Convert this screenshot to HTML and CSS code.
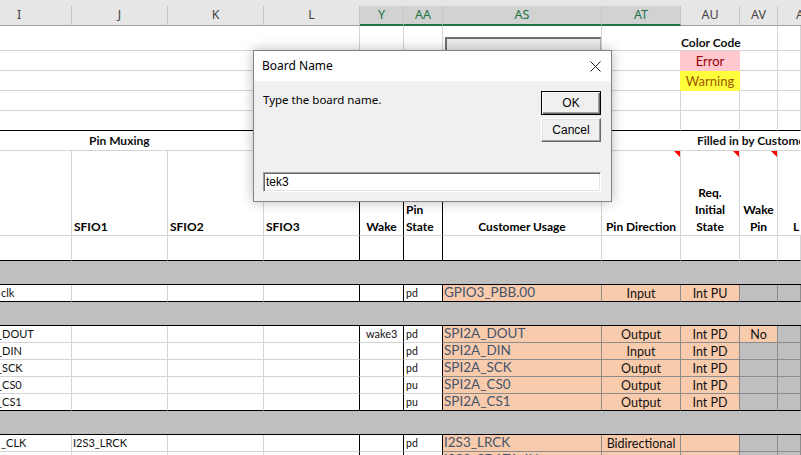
FILE: index.html
```html
<!DOCTYPE html>
<html>
<head>
<meta charset="utf-8">
<link rel="stylesheet" href="styles.css">
</head>
<body>
<div class="app">
  <div class="strip"></div>
  <div class="heads">
    <div class="h hi">I</div>
    <div class="h">J</div>
    <div class="h">K</div>
    <div class="h">L</div>
    <div class="h sel">Y</div>
    <div class="h sel">AA</div>
    <div class="h sel">AS</div>
    <div class="h sel">AT</div>
    <div class="h">AU</div>
    <div class="h">AV</div>
    <div class="h hlast">A</div>
  </div>

  <div class="rows">
    <div class="r h25">
      <div class="c s4"></div><div class="c"></div><div class="c"></div><div class="c"></div>
      <div class="c nr"></div><div class="c nr cc">Color Code</div><div class="c"></div><div class="c"></div>
    </div>
    <div class="r h20">
      <div class="c s4"></div><div class="c"></div><div class="c"></div><div class="c"></div>
      <div class="c pkr"></div><div class="c err">Error</div><div class="c"></div><div class="c"></div>
    </div>
    <div class="r h20">
      <div class="c s4"></div><div class="c"></div><div class="c"></div><div class="c"></div>
      <div class="c ywr"></div><div class="c warn">Warning</div><div class="c"></div><div class="c"></div>
    </div>
    <div class="r h20">
      <div class="c s4"></div><div class="c"></div><div class="c"></div><div class="c"></div>
      <div class="c"></div><div class="c"></div><div class="c"></div><div class="c"></div>
    </div>
    <div class="r h20 bb">
      <div class="c s4"></div><div class="c"></div><div class="c"></div><div class="c"></div>
      <div class="c"></div><div class="c"></div><div class="c"></div><div class="c"></div>
    </div>
    <div class="r h20">
      <div class="c s4 grp pm">Pin Muxing</div><div class="c"></div><div class="c"></div><div class="c"></div>
      <div class="c s4 grp fc">Filled in by Customer</div>
    </div>
    <div class="r h85">
      <div class="c th"></div>
      <div class="c th">SFIO1</div>
      <div class="c th">SFIO2</div>
      <div class="c th k">SFIO3</div>
      <div class="c th k mid">Wake</div>
      <div class="c th k">Pin<br>State</div>
      <div class="c th mid">Customer Usage</div>
      <div class="c th mid tri">Pin Direction</div>
      <div class="c th mid tri">Req.<br>Initial<br>State</div>
      <div class="c th mid tri">Wake<br>Pin</div>
      <div class="c th lv">L</div>
    </div>
    <div class="r h25 bb">
      <div class="c"></div><div class="c"></div><div class="c"></div><div class="c k"></div>
      <div class="c k"></div><div class="c k"></div><div class="c"></div><div class="c"></div>
      <div class="c"></div><div class="c"></div><div class="c"></div>
    </div>

    <div class="r h24 bb"><div class="c s11 gray"></div></div>

    <div class="r h17 bb">
      <div class="c t">clk</div><div class="c"></div><div class="c"></div><div class="c k"></div>
      <div class="c k"></div><div class="c k ps">pd</div>
      <div class="c o us">GPIO3_PBB.00</div><div class="c o dir">Input</div><div class="c o dir">Int PU</div>
      <div class="c g"></div><div class="c g"></div>
    </div>

    <div class="r h24 bb"><div class="c s11 gray"></div></div>

    <div class="r h17">
      <div class="c t cut">_DOUT</div><div class="c"></div><div class="c"></div><div class="c k"></div>
      <div class="c k t wk">wake3</div><div class="c k ps">pd</div>
      <div class="c o us">SPI2A_DOUT</div><div class="c o dir">Output</div><div class="c o dir">Int PD</div>
      <div class="c o dir">No</div><div class="c g"></div>
    </div>
    <div class="r h17">
      <div class="c t cut">_DIN</div><div class="c"></div><div class="c"></div><div class="c k"></div>
      <div class="c k"></div><div class="c k ps">pd</div>
      <div class="c o us">SPI2A_DIN</div><div class="c o dir">Input</div><div class="c o dir">Int PD</div>
      <div class="c g"></div><div class="c g"></div>
    </div>
    <div class="r h17">
      <div class="c t cut">_SCK</div><div class="c"></div><div class="c"></div><div class="c k"></div>
      <div class="c k"></div><div class="c k ps">pd</div>
      <div class="c o us">SPI2A_SCK</div><div class="c o dir">Output</div><div class="c o dir">Int PD</div>
      <div class="c g"></div><div class="c g"></div>
    </div>
    <div class="r h17">
      <div class="c t cut">_CS0</div><div class="c"></div><div class="c"></div><div class="c k"></div>
      <div class="c k"></div><div class="c k ps">pu</div>
      <div class="c o us">SPI2A_CS0</div><div class="c o dir">Output</div><div class="c o dir">Int PD</div>
      <div class="c g"></div><div class="c g"></div>
    </div>
    <div class="r h17 bb">
      <div class="c t cut">_CS1</div><div class="c"></div><div class="c"></div><div class="c k"></div>
      <div class="c k"></div><div class="c k ps">pu</div>
      <div class="c o us">SPI2A_CS1</div><div class="c o dir">Output</div><div class="c o dir">Int PD</div>
      <div class="c g"></div><div class="c g"></div>
    </div>

    <div class="r h24 bb"><div class="c s11 gray"></div></div>

    <div class="r h17">
      <div class="c t">_CLK</div><div class="c t">I2S3_LRCK</div><div class="c"></div><div class="c k"></div>
      <div class="c k"></div><div class="c k ps">pd</div>
      <div class="c o us">I2S3_LRCK</div><div class="c o dir">Bidirectional</div><div class="c o dir"></div>
      <div class="c g"></div><div class="c g"></div>
    </div>
    <div class="r h17">
      <div class="c t"></div><div class="c t"></div><div class="c"></div><div class="c k"></div>
      <div class="c k"></div><div class="c k ps"></div>
      <div class="c o us">I2S3_SDATA_IN</div><div class="c o dir"></div><div class="c o dir"></div>
      <div class="c g"></div><div class="c g"></div>
    </div>
  </div>

  <div class="shape"></div>

  <div class="dialog">
    <div class="dtitle">
      <span class="dname">Board Name</span>
      <svg class="dclose" width="11" height="11" viewBox="0 0 11 11"><path d="M0.5 0.5 L10.5 10.5 M10.5 0.5 L0.5 10.5" stroke="#1a1a1a" stroke-width="1" fill="none"/></svg>
    </div>
    <div class="dbody">
      <div class="dtop">
        <div class="prompt">Type the board name.</div>
        <div class="btns">
          <div class="btn def"><span>OK</span></div>
          <div class="btn"><span>Cancel</span></div>
        </div>
      </div>
      <div class="inp">tek3</div>
    </div>
  </div>
</div>
</body>
</html>
```
FILE: styles.css
```css
html, body {
  margin: 0;
  padding: 0;
  background: #ffffff;
}
.app {
  position: relative;
  width: 801px;
  height: 455px;
  overflow: hidden;
  font-family: Lato, "Liberation Sans", sans-serif;
}
.strip {
  height: 6px;
  background: #e6e6e6;
}
.heads, .r {
  display: grid;
  grid-template-columns: 72px 96px 96px 96px 44px 39px 159px 79px 59px 38px 23px;
  grid-template-rows: 100%;
}
.heads {
  height: 20px;
  background: #e6e6e6;
}
.h {
  box-sizing: border-box;
  border-right: 1px solid #c6c6c6;
  border-bottom: 1px solid #9f9f9f;
  text-align: center;
  font: 12.5px/18px "Noto Sans", "Open Sans", sans-serif;
  color: #444444;
  white-space: nowrap;
  overflow: hidden;
}
.h.sel {
  background: #d2d2d2;
  color: #217346;
  border-bottom: 2px solid #217346;
}
.h.hi {
  text-align: left;
  padding-left: 17px;
}
.h.hlast {
  text-align: left;
  padding-left: 18px;
  border-right: none;
}

.h25 { height: 25px; }
.h20 { height: 20px; }
.h85 { height: 85px; }
.h24 { height: 24px; }
.h17 { height: 17px; }

.c {
  box-sizing: border-box;
  border-right: 1px solid #d4d4d4;
  border-bottom: 1px solid #d4d4d4;
  white-space: nowrap;
  overflow: hidden;
  font-size: 11px;
  line-height: 16px;
  color: #111111;
  padding: 0 2px;
}
.s4 { grid-column: span 4; }
.s11 { grid-column: span 11; border-right: none; }
.nr { border-right-color: transparent; }
.k { border-right-color: #000000; }
.bb > .c { border-bottom-color: #000000; }

.cc {
  overflow: visible;
  font-weight: 700;
  font-size: 12px;
  line-height: 16px;
  padding: 9px 0 0 0;
  text-align: center;
  position: relative;
  z-index: 1;
}
.err, .warn {
  font-size: 13px;
  line-height: 20px;
  text-align: center;
  padding: 0;
}
.err {
  background: #ffc7ce;
  color: #9c0006;
  border-color: #ffc7ce;
}
.warn {
  background: #ffff3b;
  color: #9c5700;
  border-color: #ffff3b;
}
.pkr { border-right-color: #ffc7ce; }
.ywr { border-right-color: #ffff3b; }

.grp {
  font-weight: 700;
  font-size: 12px;
  line-height: 20px;
  border-right-color: transparent;
}
.pm { padding-left: 89px; }
.fc { padding-left: 95px; }

.th {
  display: flex;
  flex-direction: column;
  justify-content: flex-end;
  font-weight: 700;
  font-size: 12px;
  line-height: 17px;
  color: #000000;
  position: relative;
}
.mid { text-align: center; }
.lv { padding-left: 15px; border-right: none; }
.tri::after {
  content: "";
  position: absolute;
  top: 0;
  right: 0;
  width: 0;
  height: 0;
  border-top: 6px solid #ff0000;
  border-left: 6px solid transparent;
}

.gray {
  background: #bfbfbf;
}
.t { font-size: 11px; padding-left: 1px; }
.cut { text-indent: -5px; padding-left: 2px; }
.wk { padding-left: 6px; }
.ps { font-size: 10.5px; padding-left: 2px; }

.o {
  background: #f8cbad;
  border-right-color: #8c8c8c;
  border-bottom-color: #8c8c8c;
}
.g {
  background: #bfbfbf;
  border-right-color: #8c8c8c;
  border-bottom-color: #8c8c8c;
}
.us {
  font-size: 13.5px;
  line-height: 15px;
  color: #44546a;
  padding-left: 1px;
}
.dir {
  font-size: 12.5px;
  line-height: 17px;
  text-align: center;
  padding: 0;
}

.shape {
  position: absolute;
  left: 445px;
  top: 37px;
  width: 156px;
  height: 40px;
  box-sizing: border-box;
  border-top: 2px solid #6f6f6f;
  border-left: 2px solid #6f6f6f;
  border-right: 1px solid #b0b0b0;
  background: #ececec;
}

.dialog {
  position: absolute;
  left: 253px;
  top: 50px;
  width: 359px;
  height: 152px;
  box-sizing: border-box;
  border: 1px solid #838383;
  background: #f0f0f0;
  box-shadow: 0 0 12px rgba(0, 0, 0, 0.28);
  display: flex;
  flex-direction: column;
}
.dtitle {
  height: 30px;
  background: #ffffff;
  display: flex;
  align-items: center;
  justify-content: space-between;
  padding: 0 10px 0 8px;
}
.dname {
  font: 12px/16px "Noto Sans", "Open Sans", sans-serif;
  color: #000000;
}
.dclose { display: block; }
.dbody {
  flex: 1;
  display: flex;
  flex-direction: column;
  padding: 10px 10px 9px 9px;
}
.dtop {
  display: flex;
  justify-content: space-between;
  align-items: flex-start;
}
.prompt {
  font: 11.5px/16px "Noto Sans", "Open Sans", sans-serif;
  color: #000000;
  padding-top: 1px;
}
.btns {
  display: flex;
  flex-direction: column;
  gap: 3px;
}
.btn {
  box-sizing: border-box;
  width: 60px;
  height: 24px;
  background: #f0f0f0;
  border-top: 1px solid #ffffff;
  border-left: 1px solid #ffffff;
  border-right: 1px solid #696969;
  border-bottom: 1px solid #696969;
  box-shadow: inset -1px -1px 0 #a0a0a0, inset 1px 1px 0 #e3e3e3;
  display: flex;
  align-items: center;
  justify-content: center;
  font: 12px/14px "Liberation Sans", Arial, sans-serif;
  color: #000000;
}
.btn.def {
  border: 1px solid #000000;
  box-shadow: inset 1px 1px 0 #ffffff, inset -1px -1px 0 #696969, inset -2px -2px 0 #a0a0a0;
}
.inp {
  margin-top: auto;
  box-sizing: border-box;
  height: 20px;
  background: #ffffff;
  border-top: 1px solid #a0a0a0;
  border-left: 1px solid #a0a0a0;
  border-right: 1px solid #ffffff;
  border-bottom: 1px solid #ffffff;
  box-shadow: inset 1px 1px 0 #696969, inset -1px -1px 0 #e3e3e3;
  font: 12px/18px "Liberation Sans", Arial, sans-serif;
  color: #000000;
  padding-left: 2px;
}
```
